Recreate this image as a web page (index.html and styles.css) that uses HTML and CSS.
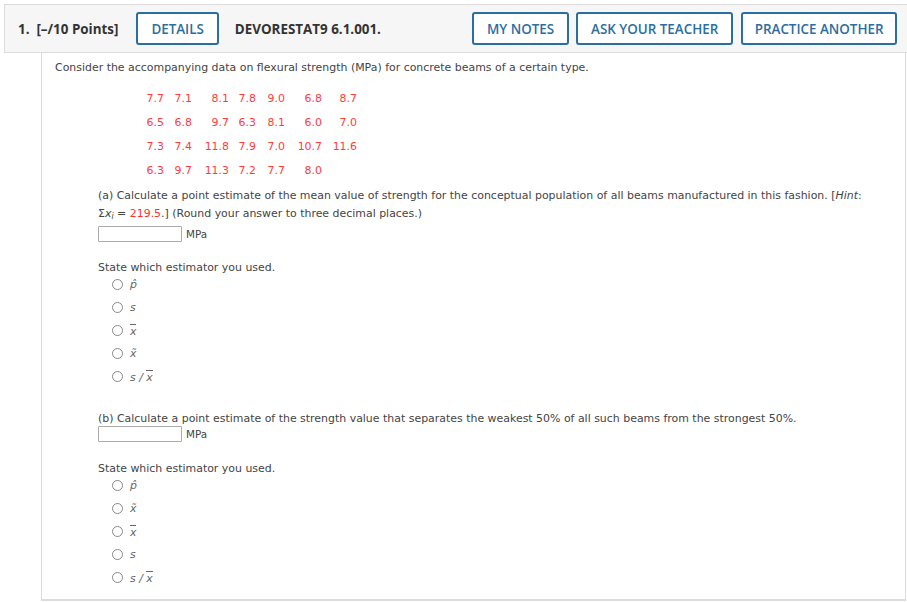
FILE: index.html
```html
<!DOCTYPE html>
<html>
<head>
<meta charset="utf-8">
<link rel="stylesheet" href="styles.css">
</head>
<body>
<div class="qhead">
  <div class="qnum">1.&nbsp; [–/10 Points]</div>
  <div class="btn btn-first">DETAILS</div>
  <div class="qid">DEVORESTAT9 6.1.001.</div>
  <div class="spacer"></div>
  <div class="btn">MY NOTES</div>
  <div class="btn">ASK YOUR TEACHER</div>
  <div class="btn btn-last">PRACTICE ANOTHER</div>
</div>
<div class="qbody">
  <p class="intro">Consider the accompanying data on flexural strength (MPa) for concrete beams of a certain type.</p>
  <table class="data">
    <tr><td class="c1">7.7</td><td class="c2">7.1</td><td class="c3">8.1</td><td class="c4">7.8</td><td class="c5">9.0</td><td class="c6">6.8</td><td class="c7">8.7</td></tr>
    <tr><td class="c1">6.5</td><td class="c2">6.8</td><td class="c3">9.7</td><td class="c4">6.3</td><td class="c5">8.1</td><td class="c6">6.0</td><td class="c7">7.0</td></tr>
    <tr><td class="c1">7.3</td><td class="c2">7.4</td><td class="c3">11.8</td><td class="c4">7.9</td><td class="c5">7.0</td><td class="c6">10.7</td><td class="c7">11.6</td></tr>
    <tr><td class="c1">6.3</td><td class="c2">9.7</td><td class="c3">11.3</td><td class="c4">7.2</td><td class="c5">7.7</td><td class="c6">8.0</td><td class="c7"></td></tr>
  </table>
  <div class="part parta">
    <p class="ptext">(a) Calculate a point estimate of the mean value of strength for the conceptual population of all beams manufactured in this fashion. [<i>Hint</i>:<br>Σ<i>x<sub>i</sub></i> = <span class="red">219.5</span>.] (Round your answer to three decimal places.)</p>
    <div class="answer"><span class="box"></span><span class="unit">MPa</span></div>
    <p class="state">State which estimator you used.</p>
    <ul class="opts">
      <li><span class="radio"></span><span class="m">p̂</span></li>
      <li><span class="radio"></span><span class="m">s</span></li>
      <li><span class="radio"></span><span class="m"><span class="bar">x</span></span></li>
      <li><span class="radio"></span><span class="m">x̃</span></li>
      <li><span class="radio"></span><span class="m">s / <span class="bar">x</span></span></li>
    </ul>
  </div>
  <div class="part partb">
    <p class="ptext">(b) Calculate a point estimate of the strength value that separates the weakest 50% of all such beams from the strongest 50%.</p>
    <div class="answer"><span class="box"></span><span class="unit">MPa</span></div>
    <p class="state">State which estimator you used.</p>
    <ul class="opts">
      <li><span class="radio"></span><span class="m">p̂</span></li>
      <li><span class="radio"></span><span class="m">x̃</span></li>
      <li><span class="radio"></span><span class="m"><span class="bar">x</span></span></li>
      <li><span class="radio"></span><span class="m">s</span></li>
      <li><span class="radio"></span><span class="m">s / <span class="bar">x</span></span></li>
    </ul>
  </div>
</div>
</body>
</html>
```

FILE: styles.css
```css
html, body {
  margin: 0;
  padding: 0;
  background: #fff;
}
body {
  width: 907px;
  height: 602px;
  overflow: hidden;
}
.qhead {
  margin: 4px 0 0 4px;
  width: 920px;
  height: 49px;
  box-sizing: border-box;
  border: 1px solid #dcdcdc;
  background: #f6f6f6;
  display: flex;
  align-items: center;
  padding-left: 13px;
  font-family: "Open Sans", "Liberation Sans", sans-serif;
  font-weight: 600;
  font-size: 13.4px;
  color: #333;
}
.qnum {
  font-weight: 700;
  margin-right: 18px;
}
.qid {
  font-weight: 700;
  margin-left: 16px;
}
.spacer { flex: 1; }
.btn {
  height: 33px;
  box-sizing: border-box;
  border: 2px solid #2b6ea0;
  border-radius: 3px;
  background: #fff;
  color: #2b6ea0;
  font-weight: 600;
  font-size: 13.4px;
  display: flex;
  align-items: center;
  padding: 0 13px;
  margin-left: 7px;
}
.btn-first { margin-left: 0; }
.btn-last { margin-left: 8px; margin-right: 26px; padding: 0 11.5px; }
.qbody {
  margin-left: 41px;
  width: 865px;
  height: 548px;
  box-sizing: border-box;
  border-left: 1px solid #dcdcdc;
  border-right: 1px solid #dcdcdc;
  border-bottom: 2px solid #dcdcdc;
  padding: 8px 0 0 13px;
  font-family: "DejaVu Sans", Verdana, sans-serif;
  font-size: 10.95px;
  color: #444;
}
p { margin: 0; }
.intro { line-height: 14px; }
.data {
  border-collapse: collapse;
  margin: 12px 0 0 89px;
  color: #ff3b3b;
}
.data td {
  text-align: right;
  padding: 0;
  height: 24px;
  line-height: 24px;
}
.c1 { width: 20px; }
.c2 { width: 28px; }
.c3 { width: 37px; }
.c4 { width: 27px; }
.c5 { width: 29px; }
.c6 { width: 37px; }
.c7 { width: 35px; }
.part {
  margin: 4px 0 0 43px;
}
.ptext { line-height: 18px; }
.ptext sub { font-size: 8px; vertical-align: -2px; line-height: 0; }
.red { color: #ff2f2f; }
.answer {
  display: flex;
  align-items: center;
  margin-top: -3px;
  height: 18px;
}
.parta .answer { margin-top: 2px; }
.box {
  width: 84px;
  height: 16px;
  box-sizing: border-box;
  border: 1px solid #aaa;
  border-radius: 1px;
  background: #fff;
}
.unit { margin-left: 4px; font-size: 10.4px; }
.state { margin-top: 19px; line-height: 14px; }
.parta .state { margin-top: 18px; }
.opts {
  list-style: none;
  margin: -2px 0 0 14px;
  padding: 0;
}
.opts li {
  display: flex;
  align-items: center;
  height: 23px;
}
.radio {
  width: 9px;
  height: 9px;
  border: 1px solid #888;
  border-radius: 50%;
  margin-right: 7px;
}
.m {
  font-style: italic;
  color: #666;
  font-size: 10.95px;
}
.bar {
  display: inline-block;
  border-top: 1px solid #666;
  line-height: 11px;
  padding-top: 1px;
}
.partb { margin-top: 22px; }
```
